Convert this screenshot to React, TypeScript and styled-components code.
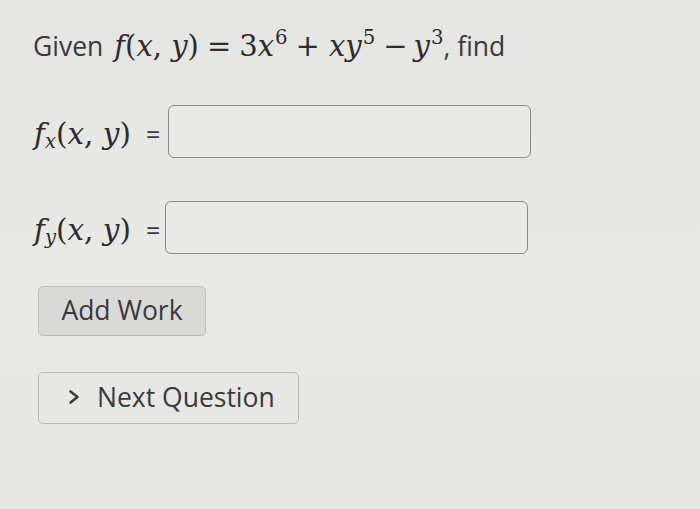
import React from "react";
import styled, { createGlobalStyle } from "styled-components";

const GlobalStyle = createGlobalStyle`
  html, body {
    margin: 0;
    padding: 0;
    background: #e7e7e4;
  }
  body {
    font-family: "Open Sans", "Liberation Sans", sans-serif;
    color: #3a393c;
  }
`;

const Page = styled.div`
  width: 700px;
  height: 509px;
  box-sizing: border-box;
  padding: 24px 0 0 33px;
  display: flex;
  flex-direction: column;
  background: linear-gradient(180deg, #e5e5e2 0%, #e9e9e6 60%, #e6e6e3 100%);
  overflow: hidden;
`;

const Prompt = styled.div`
  font-size: 26.5px;
  line-height: 44px;
  height: 44px;
  white-space: nowrap;
  display: flex;
  align-items: baseline;
`;

const MathText = styled.span<{ $size: number; $lead?: number }>`
  font-family: "DejaVu Serif", "Liberation Serif", serif;
  font-size: ${(p) => p.$size}px;
  margin-left: ${(p) => p.$lead ?? 0}px;
  color: #2c2b2e;
  white-space: nowrap;
`;

const Var = styled.i`
  font-style: italic;
`;

const Sup = styled.sup`
  font-size: 0.68em;
  vertical-align: 0.6em;
  line-height: 0;
  margin-left: 1px;
`;

const Sub = styled.sub`
  font-size: 0.66em;
  vertical-align: -0.2em;
  line-height: 0;
  font-style: italic;
`;

const Op = styled.span<{ $l: number; $r: number }>`
  margin: 0 ${(p) => p.$r}px 0 ${(p) => p.$l}px;
`;

const AnswerRow = styled.div<{ $top: number; $boxLeft: number }>`
  display: flex;
  align-items: center;
  margin-top: ${(p) => p.$top}px;
  height: 53px;
  & > label {
    width: ${(p) => p.$boxLeft}px;
  }
`;

const Label = styled.label`
  display: flex;
  align-items: baseline;
  white-space: nowrap;
  padding-top: 4px;
`;

const Equals = styled.span`
  font-family: "Open Sans", "Liberation Sans", sans-serif;
  font-size: 25px;
  margin-left: 15px;
  color: #3a393c;
`;

const AnswerBox = styled.input`
  width: 363px;
  height: 53px;
  box-sizing: border-box;
  border: 1.5px solid #8a8a89;
  border-radius: 6px;
  background: #e9e9e7;
  outline: none;
  font-size: 20px;
  padding: 0 10px;
`;

const Button = styled.button<{ $tone: "filled" | "plain"; $top: number; $width: number; $height: number }>`
  margin-top: ${(p) => p.$top}px;
  margin-left: 5px;
  width: ${(p) => p.$width}px;
  height: ${(p) => p.$height}px;
  box-sizing: border-box;
  display: flex;
  align-items: center;
  justify-content: ${(p) => (p.$tone === "filled" ? "center" : "flex-start")};
  gap: 17px;
  border-radius: 5px;
  border: 1.5px solid ${(p) => (p.$tone === "filled" ? "#bdbdbb" : "#b8b8b6")};
  background: ${(p) => (p.$tone === "filled" ? "#d9d9d7" : "#e7e7e4")};
  font-family: "Open Sans", "Liberation Sans", sans-serif;
  font-size: 26.5px;
  color: #3a393c;
  padding: 0 0 2px ${(p) => (p.$tone === "filled" ? 0 : 29)}px;
`;

function Chevron() {
  return (
    <svg width="12" height="16" viewBox="0 0 12 16">
      <polyline points="2.5,2.5 9.5,8 2.5,13.5" fill="none" stroke="#3a393c" strokeWidth="2.6" strokeLinecap="round" strokeLinejoin="round" />
    </svg>
  );
}

export default function App() {
  return (
    <>
      <GlobalStyle />
      <Page>
        <Prompt>
          <span>Given</span>
          <MathText $size={29} $lead={11}>
            <Var>f</Var>(<Var>x</Var>, <Var>y</Var>)
            <Op $l={8} $r={8}>=</Op>
            3<Var>x</Var>
            <Sup>6</Sup>
            <Op $l={8} $r={9}>+</Op>
            <Var>xy</Var>
            <Sup>5</Sup>
            <Op $l={8} $r={6}>−</Op>
            <Var>y</Var>
            <Sup>3</Sup>
          </MathText>
          <span>, find</span>
        </Prompt>

        <AnswerRow $top={37} $boxLeft={135}>
          <Label>
            <MathText $size={29.5} $lead={1}>
              <Var>f</Var>
              <Sub>x</Sub>(<Var>x</Var>, <Var>y</Var>)
            </MathText>
            <Equals>=</Equals>
          </Label>
          <AnswerBox aria-label="f_x(x, y)" />
        </AnswerRow>

        <AnswerRow $top={43} $boxLeft={132}>
          <Label>
            <MathText $size={29.5} $lead={1}>
              <Var>f</Var>
              <Sub>y</Sub>(<Var>x</Var>, <Var>y</Var>)
            </MathText>
            <Equals>=</Equals>
          </Label>
          <AnswerBox aria-label="f_y(x, y)" />
        </AnswerRow>

        <Button $tone="filled" $top={32} $width={168} $height={50}>
          Add Work
        </Button>

        <Button $tone="plain" $top={36} $width={261} $height={52}>
          <Chevron />
          Next Question
        </Button>
      </Page>
    </>
  );
}
